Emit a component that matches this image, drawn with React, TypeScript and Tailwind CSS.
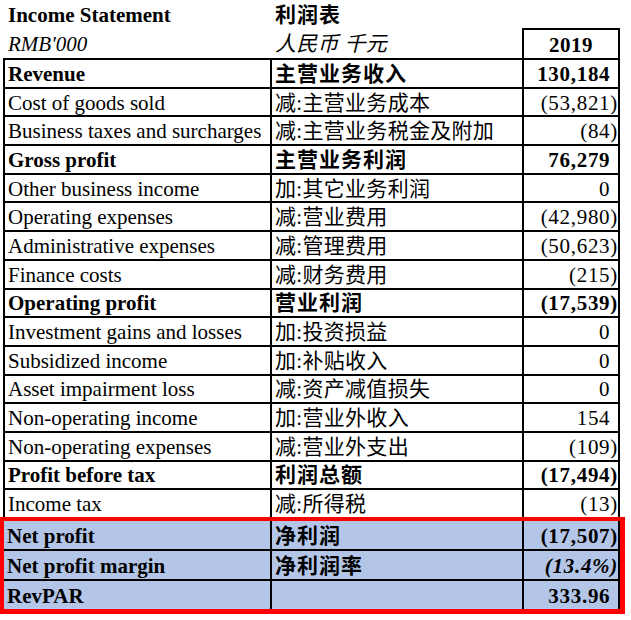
import React from "react";

type Row = { en: string; cn: string; v: string; b?: boolean; i?: boolean };

const rows: Row[] = [
  { en: "Revenue", cn: "主营业务收入", v: "130,184", b: true },
  { en: "Cost of goods sold", cn: "减:主营业务成本", v: "(53,821)" },
  { en: "Business taxes and surcharges", cn: "减:主营业务税金及附加", v: "(84)" },
  { en: "Gross profit", cn: "主营业务利润", v: "76,279", b: true },
  { en: "Other business income", cn: "加:其它业务利润", v: "0" },
  { en: "Operating expenses", cn: "减:营业费用", v: "(42,980)" },
  { en: "Administrative expenses", cn: "减:管理费用", v: "(50,623)" },
  { en: "Finance costs", cn: "减:财务费用", v: "(215)" },
  { en: "Operating profit", cn: "营业利润", v: "(17,539)", b: true },
  { en: "Investment gains and losses", cn: "加:投资损益", v: "0" },
  { en: "Subsidized income", cn: "加:补贴收入", v: "0" },
  { en: "Asset impairment loss", cn: "减:资产减值损失", v: "0" },
  { en: "Non-operating income", cn: "加:营业外收入", v: "154" },
  { en: "Non-operating expenses", cn: "减:营业外支出", v: "(109)" },
  { en: "Profit before tax", cn: "利润总额", v: "(17,494)", b: true },
  { en: "Income tax", cn: "减:所得税", v: "(13)" },
];

const hi: Row[] = [
  { en: "Net profit", cn: "净利润", v: "(17,507)", b: true },
  { en: "Net profit margin", cn: "净利润率", v: "(13.4%)", b: true, i: true },
  { en: "RevPAR", cn: "", v: "333.96", b: true },
];

function Val({ v }: { v: string }) {
  const neg = v.startsWith("(");
  return (
    <span className="tracking-[0.7px]">
      {v}
      {!neg && <span className="invisible">)</span>}
    </span>
  );
}

function Cells({ r }: { r: Row }) {
  return (
    <>
      <div className={`flex items-center pl-[3px] pt-[2px] whitespace-nowrap ${r.b ? "font-bold" : ""}`}>{r.en}</div>
      <div className={`flex items-center pl-[3px] pt-[2px] border-l-2 border-black whitespace-nowrap ${r.b ? "font-bold tracking-[1px]" : "tracking-[0.3px]"}`}>{r.cn}</div>
      <div className={`flex items-center justify-end pr-0 pt-[2px] border-l-2 border-black whitespace-nowrap ${r.b ? "font-bold" : ""} ${r.i ? "italic" : ""}`}>
        <Val v={r.v} />
      </div>
    </>
  );
}

export default function App() {
  return (
    <div
      className="w-[631px] h-[620px] bg-white text-black text-[21px] leading-none pl-[3px]"
      style={{ fontFamily: '"Liberation Serif", "Noto Sans CJK SC", serif' }}
    >
      <div className="w-[617px]">
        {/* header row 1 */}
        <div className="grid grid-cols-[265px_252px_96px] h-[28px] border-x-2 border-transparent">
          <div className="flex items-center pl-[3px] pt-[2px] font-bold">Income Statement</div>
          <div className="flex items-center pl-[3px] pt-[2px] border-l-2 border-transparent font-bold tracking-[1px]">利润表</div>
          <div />
        </div>
        {/* header row 2 */}
        <div className="grid grid-cols-[265px_252px_96px] h-[30px] border-x-2 border-transparent">
          <div className="flex items-center pl-[3px] pt-[3px] italic">RMB'000</div>
          <div className="flex items-center pl-[3px] pt-[3px] border-l-2 border-transparent italic tracking-[0.3px]">人民币 千元</div>
          <div className="flex items-center justify-center pt-[3px] font-bold border-l-2 border-t-2 border-black -mr-[2px] border-r-2 tracking-[0.5px]">2019</div>
        </div>
        {/* body */}
        <div className="border-t-2 border-black">
          {rows.map((r) => (
            <div
              key={r.en}
              className="grid grid-cols-[265px_252px_96px] h-[28.7px] border-x-2 border-b-2 border-black"
            >
              <Cells r={r} />
            </div>
          ))}
        </div>
        <div className="-ml-[3px] w-[625px] border-4 border-r-[5px] border-b-[5px] border-[#ff0000] bg-[#b4c6e7] -mt-[2px]">
          {hi.map((r, idx) => (
            <div
              key={r.en}
              className={`grid grid-cols-[266px_252px_96px_2px] ${idx === 2 ? "h-[28px]" : "h-[30px] border-b-2 border-black"}`}
            >
              <Cells r={r} />
              <div className="bg-black" />
            </div>
          ))}
        </div>
      </div>
    </div>
  );
}
